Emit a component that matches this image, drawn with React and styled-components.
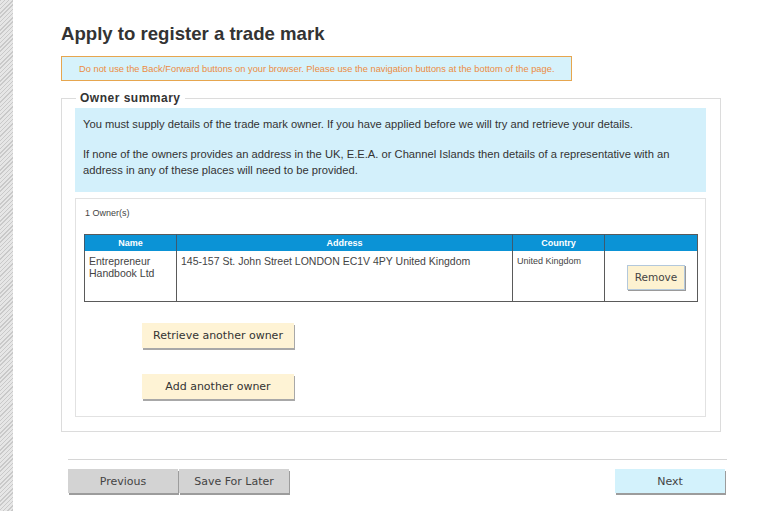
import React from 'react'
import styled, { createGlobalStyle } from 'styled-components'

const owners = [
  {
    name: 'Entrepreneur Handbook Ltd',
    address: '145-157 St. John Street LONDON EC1V 4PY United Kingdom',
    country: 'United Kingdom',
  },
]

export default function App() {
  return (
    <>
      <GlobalStyle />
      <Page>
        <Stripe />
        <Main>
          <Title>Apply to register a trade mark</Title>
          <Warning>
            Do not use the Back/Forward buttons on your browser. Please use the navigation buttons at the bottom of the page.
          </Warning>

          <Fieldset>
            <Legend>Owner summary</Legend>
            <Info>
              <p>You must supply details of the trade mark owner. If you have applied before we will try and retrieve your details.</p>
              <p>If none of the owners provides an address in the UK, E.E.A. or Channel Islands then details of a representative with an address in any of these places will need to be provided.</p>
            </Info>

            <OwnersBox>
              <Count>{owners.length} Owner(s)</Count>
              <Table>
                <colgroup>
                  <col style={{ width: 92 }} />
                  <col style={{ width: 336 }} />
                  <col style={{ width: 92 }} />
                  <col style={{ width: 93 }} />
                </colgroup>
                <thead>
                  <tr>
                    <Th>Name</Th>
                    <Th>Address</Th>
                    <Th>Country</Th>
                    <Th />
                  </tr>
                </thead>
                <tbody>
                  {owners.map((o) => (
                    <tr key={o.name}>
                      <Td>{o.name}</Td>
                      <Td>{o.address}</Td>
                      <Td $small>{o.country}</Td>
                      <ActionCell>
                        <SmallButton>Remove</SmallButton>
                      </ActionCell>
                    </tr>
                  ))}
                </tbody>
              </Table>

              <Actions>
                <OwnerButton>Retrieve another owner</OwnerButton>
                <OwnerButton>Add another owner</OwnerButton>
              </Actions>
            </OwnersBox>
          </Fieldset>

          <Nav>
            <NavGroup>
              <NavButton>Previous</NavButton>
              <NavButton>Save For Later</NavButton>
            </NavGroup>
            <NavButton $primary>Next</NavButton>
          </Nav>
        </Main>
      </Page>
    </>
  )
}

const GlobalStyle = createGlobalStyle`
  html, body {
    margin: 0;
    padding: 0;
    background: #fff;
  }
  body {
    font-family: "Liberation Sans", Arial, sans-serif;
    color: #333;
  }
`

const Page = styled.div`
  display: flex;
  min-height: 511px;
`

const Stripe = styled.div`
  width: 13px;
  flex-shrink: 0;
  background: repeating-linear-gradient(
    135deg,
    #c9c9c9 0px,
    #c9c9c9 1px,
    #e6e6e6 1px,
    #e6e6e6 3px
  );
`

const Main = styled.div`
  width: 666px;
  padding: 22px 0 0 48px;
`

const Title = styled.h1`
  margin: 0;
  font-size: 18.6px;
  line-height: 24px;
  font-weight: bold;
  color: #333;
`

const Warning = styled.div`
  margin-top: 10px;
  width: 492px;
  height: 23px;
  padding-left: 17px;
  display: flex;
  align-items: center;
  background: #d6f2fb;
  border: 1px solid #e6a64f;
  color: #ec8c43;
  font-size: 9.3px;
`

const Fieldset = styled.fieldset`
  margin: 10px 0 0 0;
  width: 631px;
  padding: 0 14px 14px 13px;
  border: 1px solid #dcdcdc;
`

const Legend = styled.legend`
  margin-left: 1px;
  padding: 0 4px;
  font-size: 12px;
  line-height: 14px;
  font-weight: bold;
  color: #333;
  letter-spacing: 0.5px;
`

const Info = styled.div`
  margin-top: 3px;
  background: #d3f0fb;
  padding: 8px 8px 14px 8px;
  font-size: 11.2px;
  line-height: 16px;
  color: #333;

  p {
    margin: 0;
  }
  p + p {
    margin-top: 14px;
  }
`

const OwnersBox = styled.div`
  margin-top: 6px;
  border: 1px solid #e2e2e2;
  padding: 8px 7px 17px 8px;
`

const Count = styled.div`
  font-size: 9px;
  line-height: 12px;
  padding-left: 1px;
  color: #444;
`

const Table = styled.table`
  margin-top: 15px;
  width: 613px;
  border-collapse: collapse;
  table-layout: fixed;
  border: 1px solid #5a5a5a;
`

const Th = styled.th`
  height: 16px;
  padding: 0;
  background: #0b93d6;
  color: #fff;
  font-size: 9px;
  font-weight: bold;
  text-align: center;
  border-left: 1px solid #3c5a70;
`

const Td = styled.td`
  vertical-align: top;
  height: 45px;
  padding: ${(p) => (p.$small ? '5px 4px 0' : '4px 4px 0')};
  font-size: ${(p) => (p.$small ? '9px' : '10.5px')};
  line-height: ${(p) => (p.$small ? '11px' : '12px')};
  color: #444;
  border-left: 1px solid #5a5a5a;
`

const ActionCell = styled.td`
  vertical-align: middle;
  padding: 2px 0 0 22px;
  border-left: 1px solid #5a5a5a;
`

const SmallButton = styled.button`
  width: 58px;
  height: 25px;
  padding: 0;
  background: #fdf2d1;
  border: 1px solid #b3c8dc;
  box-shadow: 1px 1px 0 #9a9a9a;
  font-family: "DejaVu Sans", Verdana, sans-serif;
  font-size: 10.5px;
  color: #444;
`

const Actions = styled.div`
  display: flex;
  flex-direction: column;
  align-items: flex-start;
  gap: 26px;
  margin-top: 21px;
  padding-left: 58px;
`

const OwnerButton = styled.button`
  width: 152px;
  height: 25px;
  padding: 0;
  background: #fef3d5;
  border: none;
  box-shadow: 1px 2px 0 #a8a8a8;
  font-family: "DejaVu Sans", Verdana, sans-serif;
  font-size: 11px;
  color: #333;
`

const Nav = styled.div`
  margin: 27px 0 0 7px;
  border-top: 1px solid #d6d6d6;
  padding-top: 9px;
  display: flex;
  justify-content: space-between;
  padding-right: 2px;
`

const NavGroup = styled.div`
  display: flex;
  gap: 1px;
`

const NavButton = styled.button`
  width: 110px;
  height: 24px;
  padding: 0;
  border: none;
  background: ${(p) => (p.$primary ? '#d3f2fc' : '#d3d3d3')};
  box-shadow: 1px 2px 0 #9c9c9c;
  font-family: "DejaVu Sans", Verdana, sans-serif;
  font-size: 11px;
  color: #444;
`
